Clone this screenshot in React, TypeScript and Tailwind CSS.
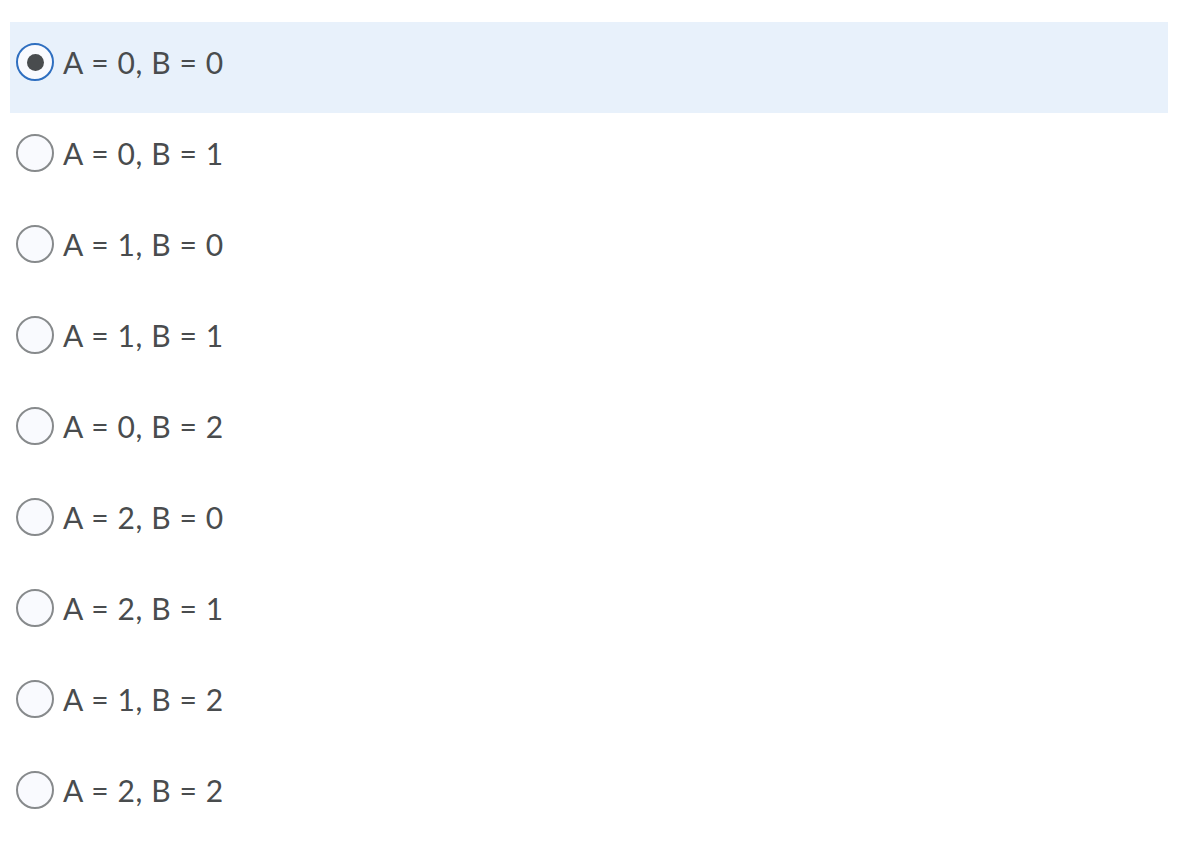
import React from "react";

const options = [
  "A = 0, B = 0",
  "A = 0, B = 1",
  "A = 1, B = 0",
  "A = 1, B = 1",
  "A = 0, B = 2",
  "A = 2, B = 0",
  "A = 2, B = 1",
  "A = 1, B = 2",
  "A = 2, B = 2",
];

export default function App() {
  const selected = 0;
  return (
    <div
      className="w-[1186px] h-[844px] bg-white pt-[22px] pl-[10px] pr-[18px]"
      style={{ fontFamily: "Lato, 'Noto Sans', sans-serif" }}
    >
      <div className="flex flex-col">
        {options.map((o, i) => {
          const isSel = i === selected;
          return (
            <div
              key={o}
              className={`flex items-start h-[91px] pt-[21px] pl-[6px] ${isSel ? "bg-[#e8f1fb]" : ""}`}
            >
              <span
                className={`flex items-center justify-center w-[38px] h-[38px] rounded-full bg-[#f9fafe] border-2 ${isSel ? "border-[#2f6fc0]" : "border-[#878a8c]"}`}
              >
                {isSel && <span className="block w-[17px] h-[17px] rounded-full bg-[#494c4e]" />}
              </span>
              <span className="ml-[9px] text-[30px] tracking-[0.6px] leading-[38px] text-[#494c4e]">{o}</span>
            </div>
          );
        })}
      </div>
    </div>
  );
}
